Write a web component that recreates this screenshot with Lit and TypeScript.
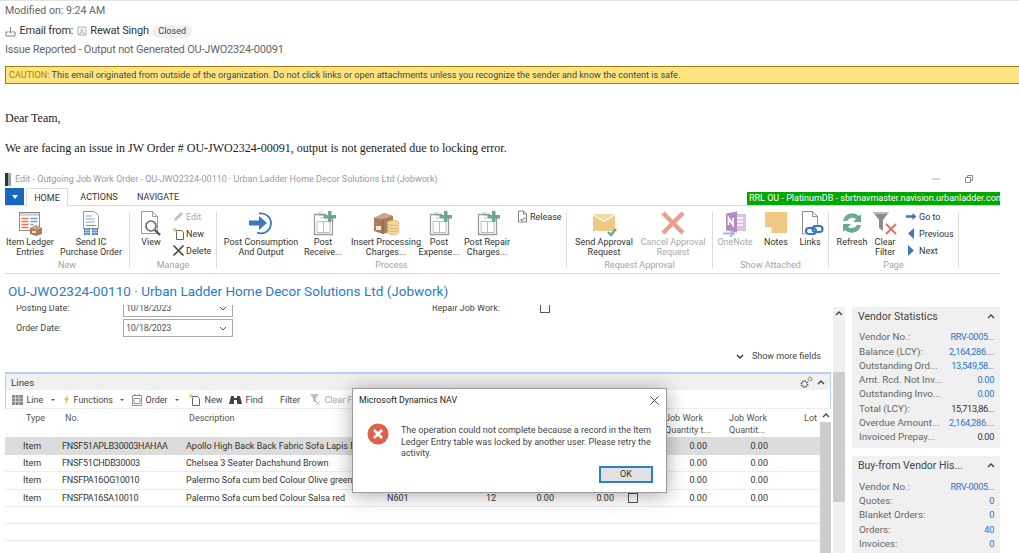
import { LitElement, html, css, svg } from "lit";
import { customElement } from "lit/decorators.js";

const big: Record<string, unknown> = {
  ledger: svg`<rect x="3.5" y="3.5" width="20" height="18" fill="#fff" stroke="#8c8c8c"/><rect x="4" y="4" width="19" height="3" fill="#cfd6de"/><path d="M5.5 9.5h7M5.5 12.5h7M5.5 15.5h7M5.5 18.5h7" stroke="#e4735c" stroke-width="1.5"/><path d="M14.5 9.5h7M14.5 12.5h7M14.5 15.5h3" stroke="#6f9fdb" stroke-width="1.5"/><path d="M14 19l6-3 6 3v6l-6 2-6-2z" fill="#a97c55"/><path d="M14 19l6-3 6 3-6 2z" fill="#caa680"/><rect x="16" y="22" width="4" height="2" fill="#f0e2d0"/>`,
  sendic: svg`<path d="M6.5 2.5h11l4 4v13h-15z" fill="#fff" stroke="#9a9a9a"/><path d="M8.5 7h6M8.5 10h9M8.5 13h9" stroke="#a9c3e4" stroke-width="1.4"/><path d="M9 16.5h10" stroke="#62a58d" stroke-width="1.2"/><path d="M7 19h6v7H7zM15 19h6v7h-6z" fill="#3f76b8"/><path d="M7 21.3h6M7 23.6h6M15 21.3h6M15 23.6h6M9 19v7M11 19v7M17 19v7M19 19v7" stroke="#cfe0f3" stroke-width=".7"/>`,
  view: svg`<path d="M4.5 2.5h11l5 5v17h-16z" fill="#fff" stroke="#9a9a9a"/><path d="M15.5 2.5v5h5" fill="none" stroke="#9a9a9a"/><circle cx="14" cy="17" r="5" fill="#fff" stroke="#666" stroke-width="1.6"/><path d="M18 21l5 5" stroke="#555" stroke-width="2.4"/>`,
  consume: svg`<path d="M12 4.5A10 10 0 1 1 10 23.5" fill="none" stroke="#3b78bd" stroke-width="1.8"/><path d="M2 11.5h10V7l8 7-8 7v-4.500H2z" fill="#3b78bd"/>`,
  post: svg`<path d="M5.500 5.500h11v3h7v17h-18z" fill="#fff" stroke="#9b9b9b" stroke-width="1.300"/><path d="M8 12.500h13v11H8zM14.500 12.500v11" fill="none" stroke="#bdbdbd"/><path d="M19 2h3.500v4H27v3.500h-4.500V13H19V9.500h-4.500V6H19z" fill="#68a896"/><path d="M9 4h5M10 6.500h4M11 9h3" stroke="#a8d0c4"/>`,
  insert: svg`<path d="M2 9l10-5 9 3v15l-10 3-9-3z" fill="#a97c5c"/><path d="M2 9l10-5 9 3-10 3z" fill="#c8a68a"/><path d="M11 10v15" stroke="#8d6548"/><rect x="4" y="17" width="5" height="4" fill="#efe5da"/><g fill="#f5d9a0" stroke="#d9a95c" stroke-width=".8"><ellipse cx="21" cy="23" rx="6" ry="2.500"/><ellipse cx="21" cy="20" rx="6" ry="2.500"/><ellipse cx="21" cy="17" rx="6" ry="2.500"/><ellipse cx="21" cy="14" rx="6" ry="2.500"/></g>`,
  envelope: svg`<path d="M3 6l11 7 11-7v16H3z" fill="#efc884"/><path d="M3 5h22L14 12z" fill="#f4d8a4"/><path d="M3 5.500l11 7 11-7" fill="none" stroke="#fff" stroke-width="1"/><path d="M18 23l3 3 5-6" fill="none" stroke="#62a58d" stroke-width="2.400"/>`,
  cancel: svg`<path d="M4 4l20 20M24 4L4 24" stroke="#e9a093" stroke-width="4.500"/>`,
  onenote: svg`<rect x="13" y="5" width="12" height="17" fill="#d9c4de"/><path d="M16 9h6M16 12.500h6M16 16h6" stroke="#fff" stroke-width="1.300"/><path d="M5 4.500l11-2v21l-11-2z" fill="#b18cbc"/><path d="M7.500 16V9l4.500 7V9" fill="none" stroke="#fff" stroke-width="1.700"/><path d="M2 24.500h10M9 21l4 3.500-4 3.500" fill="none" stroke="#9dbde0" stroke-width="1.800"/>`,
  notes: svg`<path d="M3 3h22v21H10l-7-7z" fill="#efc884"/><path d="M3 17h7v7" fill="#fff"/><path d="M3 17.500h7v6.500" fill="none" stroke="#efc884"/>`,
  links: svg`<path d="M6.500 2.500h10l5 5v13h-3M10 25H6.500z" fill="#fff"/><path d="M6.500 25V2.500h10l5 5V17M16.500 2.500v5h5" fill="none" stroke="#8f8f8f"/><path d="M6.500 25H9" stroke="#8f8f8f"/><g fill="none" stroke="#3b78bd" stroke-width="2.200"><rect x="10" y="19" width="10" height="6" rx="3"/><rect x="16.500" y="17" width="10" height="6" rx="3"/></g>`,
  refresh: svg`<path d="M5 12a9.500 9.500 0 0 1 16-5l2-2v8h-8l3-3a6 6 0 0 0-9 2z" fill="#6aa996"/><path d="M23 16a9.500 9.500 0 0 1-16 5l-2 2v-8h8l-3 3a6 6 0 0 0 9-2z" fill="#6aa996"/>`,
  clearfilter: svg`<path d="M2 3h16l-6 8v11l-4-3v-8z" fill="#8b8b8b"/><path d="M2 3h16l-2 2H4z" fill="#bcbcbc"/><path d="M15 15l10 10M25 15L15 25" stroke="#dc7563" stroke-width="2"/>`,
};

const small: Record<string, unknown> = {
  edit: svg`<path d="M2 11l1-3 6-6 2 2-6 6z" fill="#b9c3cd"/>`,
  newdoc: svg`<path d="M4.500 3.500h5l2 2v7h-7z" fill="#fff" stroke="#555" stroke-width=".9"/><path d="M3 0l.8 1.700 1.700.3-1.200 1.200.3 1.800L3 4.200 1.400 5l.3-1.800L.5 2l1.700-.3z" fill="#f0c56c"/>`,
  del: svg`<path d="M1.500 1.500l10 10M11.500 1.500l-10 10" stroke="#444" stroke-width="1.600"/>`,
  release: svg`<path d="M2.500 1h5l3 3v8h-8z" fill="#fff" stroke="#777" stroke-width=".9"/><path d="M7.500 1v3h3" fill="none" stroke="#777" stroke-width=".9"/><path d="M4.500 9l1.500 1.500 3.500-3" fill="none" stroke="#62a58d" stroke-width="1.200"/>`,
  goto: svg`<path d="M1 5.300h6.500V3l4 3.500-4 3.500V7.700H1z" fill="#3b78bd"/>`,
  prev: svg`<path d="M9 1v11L3 6.500z" fill="#3b78bd"/>`,
  next: svg`<path d="M3 1v11l6-5.500z" fill="#3b78bd"/>`,
};

const chevron = svg`<svg class="chev" viewBox="0 0 8 5" width="8" height="5"><path d="M1 4l3-3 3 3" fill="none" stroke="#444" stroke-width="1.400"/></svg>`;

const ribbon = [
  { label: "New", start: 5, width: 125, items: [
    { c: 30, w: 50, text: ["Item Ledger", "Entries"], icon: "ledger" },
    { c: 91, w: 64, text: ["Send IC", "Purchase Order"], icon: "sendic" },
  ] },
  { label: "Manage", start: 131, width: 87, items: [
    { c: 152, w: 30, text: ["View"], icon: "view" },
    { c: 196, w: 46, list: [["edit", "Edit", true], ["newdoc", "New"], ["del", "Delete"]] },
  ] },
  { label: "Process", start: 219, width: 350, items: [
    { c: 263, w: 74, text: ["Post Consumption", "And Output"], icon: "consume" },
    { c: 325, w: 36, text: ["Post", "Receive..."], icon: "post" },
    { c: 388, w: 68, text: ["Insert Processing", "Charges..."], icon: "insert" },
    { c: 441, w: 36, text: ["Post", "Expense..."], icon: "post" },
    { c: 489, w: 46, text: ["Post Repair", "Charges..."], icon: "post" },
    { c: 540, w: 44, list: [["release", "Release"]] },
  ] },
  { label: "Request Approval", start: 570, width: 146, items: [
    { c: 607, w: 60, text: ["Send Approval", "Request"], icon: "envelope" },
    { c: 676, w: 62, text: ["Cancel Approval", "Request"], icon: "cancel", off: true },
  ] },
  { label: "Show Attached", start: 717, width: 116, items: [
    { c: 739, w: 36, text: ["OneNote"], icon: "onenote", off: true },
    { c: 780, w: 26, text: ["Notes"], icon: "notes" },
    { c: 814, w: 26, text: ["Links"], icon: "links" },
  ] },
  { label: "Page", start: 834, width: 130, items: [
    { c: 857, w: 30, text: ["Refresh"], icon: "refresh" },
    { c: 890, w: 28, text: ["Clear", "Filter"], icon: "clearfilter" },
    { c: 934, w: 48, list: [["goto", "Go to"], ["prev", "Previous"], ["next", "Next"]] },
  ] },
];

const lines = [
  ["Item", "FNSF51APLB30003HAHAA", "Apollo High Back Back Fabric Sofa Lapis Blue", "", "", "", "", false, "0.00", "0.00"],
  ["Item", "FNSF51CHDB30003", "Chelsea 3 Seater Dachshund Brown", "", "", "", "", false, "0.00", "0.00"],
  ["Item", "FNSFPA16OG10010", "Palermo Sofa cum bed Colour Olive green", "", "", "", "", false, "0.00", "0.00"],
  ["Item", "FNSFPA16SA10010", "Palermo Sofa cum bed Colour Salsa red", "N601", "12", "0.00", "0.00", true, "0.00", "0.00"],
];

const stats = [
  ["Vendor No.:", "RRV-0005...", 1],
  ["Balance (LCY):", "2,164,286....", 1],
  ["Outstanding Ord...", "13,549,58...", 1],
  ["Amt. Rcd. Not Inv...", "0.00", 1],
  ["Outstanding Invo...", "0.00", 1],
  ["Total (LCY):", "15,713,86...", 0],
  ["Overdue Amount...", "2,164,286....", 1],
  ["Invoiced Prepay...", "0.00", 0],
];

const history = [
  ["Vendor No.:", "RRV-0005...", 1],
  ["Quotes:", "0", 1],
  ["Blanket Orders:", "0", 1],
  ["Orders:", "40", 1],
  ["Invoices:", "0", 1],
];

@customElement("app-root")
export class AppRoot extends LitElement {
  static styles = css`
    :host {
      display: block;
      width: 1019px;
      height: 553px;
      overflow: hidden;
      background: #fff;
      font-family: Roboto, "Noto Sans", sans-serif;
      color: #333;
    }
    svg { display: block; flex: none; }
    .topline { height: 1px; background: #e3e3e3; }
    .mail { height: 169px; box-sizing: border-box; }
    .meta { padding-left: 5px; line-height: 20px; font-size: 10.600px; color: #666; }
    .email { display: flex; align-items: center; gap: 3.500px; color: #333; font-size: 11px; letter-spacing: -.2px; }
    .chip { background: #f0f0f0; border-radius: 7px; height: 13px; line-height: 13px; padding: 0 6px; font-size: 9px; letter-spacing: 0; color: #444; margin-left: 0; }
    .subject { line-height: 18px; font-size: 11px; letter-spacing: -.2px; }
    .banner {
      margin: 7px 0 0 5px; height: 18px; box-sizing: border-box; line-height: 16px;
      background: #ffe580; border: 1px solid #a67c10; border-right: 0;
      padding-left: 3px; font-size: 9.100px; color: #444; white-space: nowrap;
    }
    .banner b { font-weight: 400; color: #b57f00; }
    .body { font-family: "Liberation Serif", serif; font-size: 12px; color: #222; line-height: 14px; padding: 27px 0 0 5px; }
    .body p { margin: 0 0 16px; }

    .win { position: relative; height: 383px; font-size: 9px; }
    .titlebar { height: 18px; display: flex; align-items: center; padding-left: 5px; gap: 4px; color: #9a9a9a; position: relative; }
    .appicon { width: 6px; height: 13px; background: linear-gradient(90deg, #333 50%, #8aa 50%); }
    .winbtns { margin-left: auto; display: flex; gap: 25px; padding-right: 46px; align-items: center; }
    .tabs { height: 18px; display: flex; align-items: stretch; margin-left: 5px; width: 995px; border-bottom: 1px solid #dcdcdc; box-sizing: border-box; color: #333; }
    .menu { width: 19px; background: #1a68bd; display: flex; align-items: center; justify-content: center; }
    .tab { display: flex; align-items: center; justify-content: center; height: 18px; box-sizing: border-box; }
    .tab.on { width: 42px; margin-left: 2px; background: #fff; border: 1px solid #dcdcdc; border-bottom: 0; }
    .tab.act { width: 62px; }
    .tab.nav { width: 56px; }
    .env { margin-left: auto; width: 253px; height: 13px; margin-top: 4px; background: #00a800; color: #fff; line-height: 13px; padding-left: 2px; box-sizing: border-box; white-space: nowrap; }

    .ribbon { display: flex; height: 68px; width: 995px; margin-left: 5px; box-sizing: border-box; border-bottom: 1px solid #dcdcdc; }
    .group { flex: none; box-sizing: border-box; margin-top: 6px; height: 56px; display: flex; flex-direction: column; border-right: 1px solid #dcdcdc; }
    .items { display: flex; flex: none; height: 48px; }
    .grouplabel { flex: none; text-align: center; color: #a4a4a4; line-height: 10px; white-space: nowrap; }
    .btn { flex: none; display: flex; flex-direction: column; align-items: center; margin-top: -3px; color: #333; }
    .btn.off { color: #a9a9a9; }
    .btn span { white-space: nowrap; line-height: 10px; display: block; }
    .btn .lab { text-align: center; }
    .list { flex: none; display: flex; flex-direction: column; margin-top: -4px; }
    .list div { display: flex; align-items: center; height: 17px; flex: none; gap: 1px; white-space: nowrap; color: #333; }
    .list div.off { color: #a9a9a9; }

    .heading { height: 29px; padding: 7px 0 0 8px; box-sizing: border-box; font-size: 13.550px; line-height: 20px; color: #2a7bcb; white-space: nowrap; }

    .content { display: flex; margin-left: 5px; height: 250px; overflow: hidden; }
    .main { width: 826px; flex: none; }
    .form { height: 67px; margin-top: 2px; overflow: hidden; }
    .frow { display: flex; align-items: center; height: 18px; margin-bottom: 2px; color: #444; }
    .frow:first-child { margin-top: -6px; }
    .frow label { width: 118px; padding-left: 11px; box-sizing: border-box; }
    .input { width: 110px; height: 18px; box-sizing: border-box; border: 1px solid #a8a8a8; padding: 0 5px 0 2px; display: flex; align-items: center; justify-content: space-between; color: #555; letter-spacing: -.3px; }
    .frow .repair { width: 108px; margin-left: 199px; padding: 0; }
    .box { width: 10px; height: 10px; border: 1px solid #555; box-sizing: border-box; background: #fff; }
    .more { display: flex; justify-content: flex-end; align-items: center; gap: 8px; margin-top: 12px; padding-right: 10px; line-height: 14px; color: #444; }

    .lines { border-top: 2px solid #b3d1f3; height: 179px; }
    .linehead { height: 16px; background: #f0f0f0; border-left: 1px solid #b3d1f3; border-right: 1px solid #b3d1f3; display: flex; align-items: center; justify-content: space-between; padding: 0 5px; font-size: 9.800px; color: #444; }
    .tools { display: flex; align-items: center; gap: 4px; }
    .toolbar { height: 19px; box-sizing: border-box; border-left: 1px solid #b3d1f3; border-right: 1px solid #b3d1f3; border-bottom: 1px solid #ededed; display: grid; grid-template-columns: 51px 69px 56px 41px 51px 30px auto; align-items: center; color: #444; white-space: nowrap; padding: 1px 0 0 6px; }
    .tool { display: flex; align-items: center; gap: 3.500px; }
    .tool.off { color: #a9a9a9; }
    .caret { width: 0; height: 0; border: 2px solid transparent; border-top: 2.500px solid #555; border-bottom: 0; margin-left: 4px; }
    .tablewrap { display: flex; height: 146px; }
    .table { width: 815px; flex: none; }
    .vbar { width: 11px; flex: none; display: flex; flex-direction: column; background: #fff; }
    .vbar .up { height: 13px; display: flex; align-items: center; justify-content: center; }
    .vbar .thumb { flex: 1; background: #cdcdcd; }
    .row {
      display: grid; grid-template-columns: 18px 39px 124px 201px 87px 22px 58px 60px 24px 69px 61px 1fr;
      height: 17.300px; align-items: center; border-bottom: 1px solid #ececec; box-sizing: border-box; white-space: nowrap; color: #333;
    }
    .row.sel { background: #dcdcdc; height: 18px; border-bottom: 0; }
    .row .r { text-align: right; }
    .row .no { letter-spacing: -.2px; }
    .head { height: 28px; display: grid; grid-template-columns: 18px 39px 124px 201px 87px 22px 58px 60px 24px 69px 61px 1fr; line-height: 12px; padding-top: 3px; box-sizing: border-box; color: #555; white-space: nowrap; }
    .head div:nth-child(2), .head div:nth-child(3), .head div:nth-child(4) { padding-left: 3px; }
    .head .j1 { padding-left: 27px; }
    .head .j2 { padding-left: 22px; }
    .head .lot { text-align: right; padding-right: 3px; }

    .mainbar { width: 12px; flex: none; margin: 4px 0 0 2px; display: flex; flex-direction: column; background: #f0f0f0; }
    .mainbar .up { height: 13px; display: flex; align-items: center; justify-content: center; }
    .mainbar .gap { height: 52px; }
    .mainbar .thumb { height: 130px; background: #cdcdcd; }
    .side { width: 148px; flex: none; margin: 4px 0 0 7px; display: flex; flex-direction: column; gap: 8px; }
    .panel { background: #f0f0f0; padding-bottom: 4px; }
    .ptitle { display: flex; align-items: center; justify-content: space-between; height: 19px; padding: 0 5px 0 6px; font-size: 10.500px; color: #444; margin-bottom: 4.400px; white-space: nowrap; }
    .prow { display: flex; justify-content: space-between; height: 14.250px; line-height: 14.250px; padding: 0 6px 0 7px; color: #666; white-space: nowrap; font-size: 9.800px; }
    .prow .link, .prow .plain { font-size: 9.200px; letter-spacing: -.35px; }
    .prow .link { color: #2b73cf; }
    .prow .plain { color: #333; }

    .dialog { position: absolute; left: 352px; top: 218px; width: 315px; height: 105px; box-sizing: border-box; background: #fff; border: 1px solid #9a9a9a; box-shadow: 0 2px 18px rgba(0, 0, 0, .35); color: #333; padding: 0 13px 0 14px; }
    .dtitle { display: flex; align-items: center; justify-content: space-between; height: 22px; margin: 0 -6px 0 -8px; color: #222; font-size: 8.800px; }
    .dbody { display: flex; gap: 12px; margin-top: 12px; }
    .dtext { line-height: 11.500px; color: #444; font-size: 9px; margin-top: 2px; white-space: nowrap; }
    .dfoot { display: flex; justify-content: flex-end; margin-top: 6px; }
    .ok { width: 54px; height: 17px; box-sizing: border-box; border: 2px solid #2b7fd0; background: #e1e1e1; display: flex; align-items: center; justify-content: center; color: #333; }
  `;

  private renderGroup(g: any) {
    let x = g.start;
    return html`<div class="group" style="width:${g.width}px">
      <div class="items">
        ${g.items.map((it: any) => {
          const ml = it.c - it.w / 2 - x;
          x = it.c + it.w / 2;
          if (it.list) {
            return html`<div class="list" style="width:${it.w}px;margin-left:${ml}px">
              ${it.list.map((l: any) => html`<div class=${l[2] ? "off" : ""}><svg viewBox="0 0 13 13" width="13" height="13">${small[l[0]]}</svg>${l[1]}</div>`)}
            </div>`;
          }
          return html`<div class="btn ${it.off ? "off" : ""}" style="width:${it.w}px;margin-left:${ml}px">
            <svg viewBox="0 0 28 28" width="28" height="28">${big[it.icon]}</svg>
            <div class="lab">${it.text.map((t: string) => html`<span>${t}</span>`)}</div>
          </div>`;
        })}
      </div>
      <div class="grouplabel">${g.label}</div>
    </div>`;
  }

  private renderPanel(title: string, rows: any[]) {
    return html`<div class="panel">
      <div class="ptitle"><span>${title}</span>${chevron}</div>
      ${rows.map((r) => html`<div class="prow"><span>${r[0]}</span><span class=${r[2] ? "link" : "plain"}>${r[1]}</span></div>`)}
    </div>`;
  }

  render() {
    return html`
      <div class="topline"></div>
      <div class="mail">
        <div class="meta">Modified on: 9:24 AM</div>
        <div class="meta email">
          <svg viewBox="0 0 11 11" width="11" height="11"><path d="M1 6v4h9V6L8 6M3 6H1M5.500 1v6M3.500 5l2 2 2-2" fill="none" stroke="#777" stroke-width=".9"/></svg>
          <span>Email from:</span>
          <svg viewBox="0 0 10 10" width="10" height="10"><path d="M1 1h8v8H1zM3 9V7l2-1 2 1v2M5 3a1.300 1.300 0 1 0 .01 0" fill="none" stroke="#999" stroke-width=".8"/></svg>
          <span>Rewat Singh</span>
          <span class="chip">Closed</span>
        </div>
        <div class="meta subject">Issue Reported - Output not Generated OU-JWO2324-00091</div>
        <div class="banner"><b>CAUTION:</b> This email originated from outside of the organization. Do not click links or open attachments unless you recognize the sender and know the content is safe.</div>
        <div class="body">
          <p>Dear Team,</p>
          <p>We are facing an issue in JW Order # OU-JWO2324-00091, output is not generated due to locking error.</p>
        </div>
      </div>
      <div class="win">
        <div class="titlebar">
          <div class="appicon"></div>
          <span>Edit - Outgoing Job Work Order - OU-JWO2324-00110 · Urban Ladder Home Decor Solutions Ltd (Jobwork)</span>
          <div class="winbtns">
            <svg viewBox="0 0 8 2" width="8" height="2"><path d="M0 1h8" stroke="#aaa"/></svg>
            <svg viewBox="0 0 8 8" width="8" height="8"><path d="M.5 2.500h5v5h-5zM2.500 2.500v-2h5v5h-2" fill="none" stroke="#888"/></svg>
          </div>
        </div>
        <div class="tabs">
          <div class="menu"><svg viewBox="0 0 6 4" width="6" height="4"><path d="M0 0h6L3 4z" fill="#fff"/></svg></div>
          <div class="tab on">HOME</div>
          <div class="tab act">ACTIONS</div>
          <div class="tab nav">NAVIGATE</div>
          <div class="env">RRL OU - PlatinumDB - sbrtnavmaster.navision.urbanladder.com</div>
        </div>
        <div class="ribbon">${ribbon.map((g) => this.renderGroup(g))}</div>
        <div class="heading">OU-JWO2324-00110 · Urban Ladder Home Decor Solutions Ltd (Jobwork)</div>
        <div class="content">
          <div class="main">
            <div class="form">
              <div class="frow">
                <label>Posting Date:</label>
                <div class="input">10/18/2023 <svg viewBox="0 0 8 5" width="8" height="5"><path d="M1 1l3 3 3-3" fill="none" stroke="#555"/></svg></div>
                <label class="repair">Repair Job Work:</label><div class="box"></div>
              </div>
              <div class="frow">
                <label>Order Date:</label>
                <div class="input">10/18/2023 <svg viewBox="0 0 8 5" width="8" height="5"><path d="M1 1l3 3 3-3" fill="none" stroke="#555"/></svg></div>
              </div>
              <div class="more">
                <svg viewBox="0 0 8 5" width="8" height="5"><path d="M1 1l3 3 3-3" fill="none" stroke="#333" stroke-width="1.400"/></svg>
                <span>Show more fields</span>
              </div>
            </div>
            <div class="lines">
              <div class="linehead">
                <span>Lines</span>
                <div class="tools">
                  <svg viewBox="0 0 13 12" width="13" height="12"><circle cx="4.500" cy="8" r="3" fill="none" stroke="#666" stroke-width="1.800" stroke-dasharray="1.500 .8"/><circle cx="10" cy="3" r="1.800" fill="none" stroke="#777" stroke-width="1.200" stroke-dasharray="1 .6"/></svg>
                  ${chevron}
                </div>
              </div>
              <div class="toolbar">
                <div class="tool"><svg viewBox="0 0 11 10" width="11" height="10"><path d="M0 0h11v10H0z" fill="#888"/><path d="M0 3.200h11M0 6.400h11M3.500 0v10M7 0v10" stroke="#ddd" stroke-width=".8"/></svg>Line<i class="caret"></i></div>
                <div class="tool"><svg viewBox="0 0 7 11" width="7" height="11"><path d="M5 0L1 6h2l-1 5 4-7H4z" fill="#eeb85c"/></svg>Functions<i class="caret"></i></div>
                <div class="tool"><svg viewBox="0 0 10 12" width="10" height="12"><path d="M.5 1.500h9v10h-9zM2 4.500h6v5H2zM3 0v2M7 0v2" fill="#fff" stroke="#777" stroke-width=".8"/></svg>Order<i class="caret"></i></div>
                <div class="tool"><svg viewBox="0 0 13 13" width="13" height="13">${small.newdoc}</svg>New</div>
                <div class="tool"><svg viewBox="0 0 13 10" width="13" height="10"><path d="M2 1h3v2h3V1h3l2 8H8V5H5v4H0z" fill="#444"/></svg>Find</div>
                <div class="tool">Filter</div>
                <div class="tool off"><svg viewBox="0 0 11 11" width="11" height="11"><path d="M0 0h9L6 4v5L3 7V4z" fill="#b9c3cd"/><path d="M6 7l4 4M10 7l-4 4" stroke="#c9c9c9"/></svg>Clear Filter</div>
              </div>
              <div class="tablewrap">
                <div class="table">
                  <div class="head">
                    <div></div><div>Type</div><div>No.</div><div>Description</div>
                    <div></div><div></div><div></div><div></div><div></div>
                    <div class="j1">Job Work<br>Quantity t...</div>
                    <div class="j2">Job Work<br>Quantit...</div>
                    <div class="lot">Lot</div>
                  </div>
                  ${lines.map((l, i) => html`<div class="row ${i === 0 ? "sel" : ""}">
                    <div></div><div>${l[0]}</div><div class="no">${l[1]}</div><div>${l[2]}</div><div>${l[3]}</div>
                    <div class="r">${l[4]}</div><div class="r">${l[5]}</div><div class="r">${l[6]}</div>
                    <div style="padding-left:14px">${l[7] ? html`<div class="box"></div>` : ""}</div>
                    <div class="r">${l[8]}</div><div class="r">${l[9]}</div><div></div>
                  </div>`)}
                  <div class="row"></div><div class="row"></div><div class="row"></div>
                </div>
                <div class="vbar"><div class="up">${chevron}</div><div class="thumb"></div></div>
              </div>
            </div>
          </div>
          <div class="mainbar"><div class="up">${chevron}</div><div class="gap"></div><div class="thumb"></div></div>
          <div class="side">
            ${this.renderPanel("Vendor Statistics", stats)}
            ${this.renderPanel("Buy-from Vendor His...", history)}
          </div>
        </div>
        <div class="dialog">
          <div class="dtitle">
            <span>Microsoft Dynamics NAV</span>
            <svg viewBox="0 0 9 9" width="9" height="9"><path d="M.5.5l8 8M8.500.5l-8 8" stroke="#444"/></svg>
          </div>
          <div class="dbody">
            <svg viewBox="0 0 22 22" width="22" height="22"><circle cx="11" cy="11" r="10.500" fill="#dc6248"/><path d="M7 7l8 8M15 7l-8 8" stroke="#fff" stroke-width="2.600"/></svg>
            <div class="dtext">The operation could not complete because a record in the Item<br>Ledger Entry table was locked by another user. Please retry the<br>activity.</div>
          </div>
          <div class="dfoot"><div class="ok">OK</div></div>
        </div>
      </div>
    `;
  }
}
